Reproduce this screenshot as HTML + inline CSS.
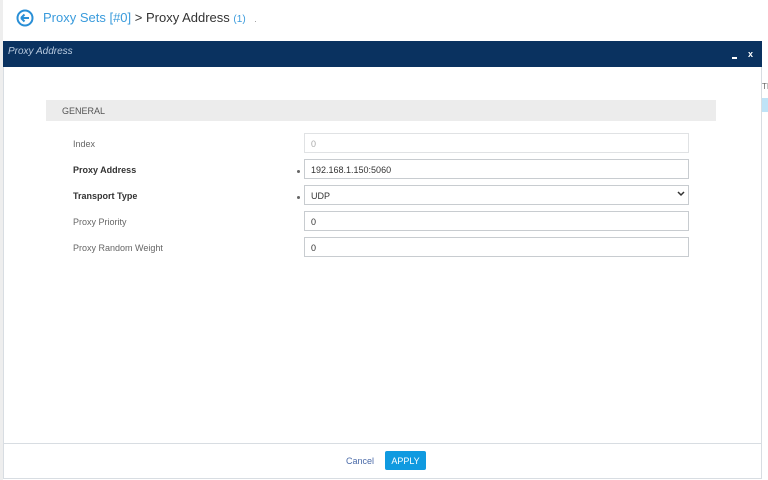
<!DOCTYPE html>
<html><head><style>
*{margin:0;padding:0;box-sizing:border-box}
body{width:768px;height:480px;background:#fff;font-family:"Liberation Sans",sans-serif;position:relative;overflow:hidden}
.abs{position:absolute}
.lbl{position:absolute;left:73px;font-size:9px;color:#666}
.b{color:#333;font-weight:bold}
.in{position:absolute;left:304px;width:385px;height:20px;border:1px solid #c8ccd0;font-size:9px;color:#333;padding:5px 0 0 6px;background:#fff}
.dot{position:absolute;left:297px;width:3px;height:3px;border-radius:50%;background:#666}
</style></head><body>
<div class="abs" style="left:0;top:0;width:3px;height:480px;background:#eee"></div>
<svg class="abs" style="left:16px;top:9px" width="18" height="18" viewBox="0 0 18 18"><circle cx="9" cy="9" r="7.5" fill="none" stroke="#2a8fd6" stroke-width="2"/><path d="M5 9h8M5 9l3.5-3.5M5 9l3.5 3.5" stroke="#2a8fd6" stroke-width="2" fill="none"/></svg>
<div class="abs" style="left:43px;top:10px;font-size:13px;color:#3a9bdc">Proxy Sets [#0] <span style="color:#333">&gt; Proxy Address</span> <span style="font-size:10px">(1)</span> <span style="color:#999;font-size:9px">&nbsp;&nbsp;.</span></div>
<div class="abs" style="left:762px;top:82px;font-size:8px;color:#666">TI</div>
<div class="abs" style="left:762px;top:98px;width:6px;height:14px;background:#bfe3f7"></div>
<div class="abs" style="left:3px;top:41px;width:759px;height:438px;border:1px solid #d8dde2;background:#fff"></div>
<div class="abs" style="left:3px;top:41px;width:759px;height:26px;background:#0a3260"></div>
<div class="abs" style="left:8px;top:46px;font-size:10px;font-style:italic;color:#b9cbe0">Proxy Address</div>
<div class="abs" style="left:732px;top:57px;width:5px;height:2px;background:#fff"></div>
<div class="abs" style="left:748px;top:49px;font-size:9px;color:#fff;font-weight:bold">x</div>
<div class="abs" style="left:46px;top:100px;width:670px;height:21px;background:#ececec;font-size:9px;color:#555;padding:6px 0 0 16px">GENERAL</div>
<div class="lbl" style="top:139px">Index</div>
<div class="in" style="top:133px;color:#aaa;border-color:#e0e2e4">0</div>
<div class="lbl b" style="top:165px">Proxy Address</div>
<div class="dot" style="top:170px"></div>
<div class="in" style="top:159px">192.168.1.150:5060</div>
<div class="lbl b" style="top:191px">Transport Type</div>
<div class="dot" style="top:196px"></div>
<div class="in" style="top:185px">UDP</div>
<svg class="abs" style="left:677px;top:191px" width="8" height="6"><path d="M1 1l3 3 3-3" stroke="#333" stroke-width="1.5" fill="none"/></svg>
<div class="lbl" style="top:217px">Proxy Priority</div>
<div class="in" style="top:211px">0</div>
<div class="lbl" style="top:243px">Proxy Random Weight</div>
<div class="in" style="top:237px">0</div>
<div class="abs" style="left:4px;top:443px;width:757px;height:1px;background:#d8dde2"></div>
<div class="abs" style="left:346px;top:456px;font-size:9px;color:#4a6aa8">Cancel</div>
<div class="abs" style="left:385px;top:451px;width:41px;height:19px;background:#109ae0;border-radius:2px;color:#fff;font-size:9px;text-align:center;padding-top:5px">APPLY</div>
</body></html>
